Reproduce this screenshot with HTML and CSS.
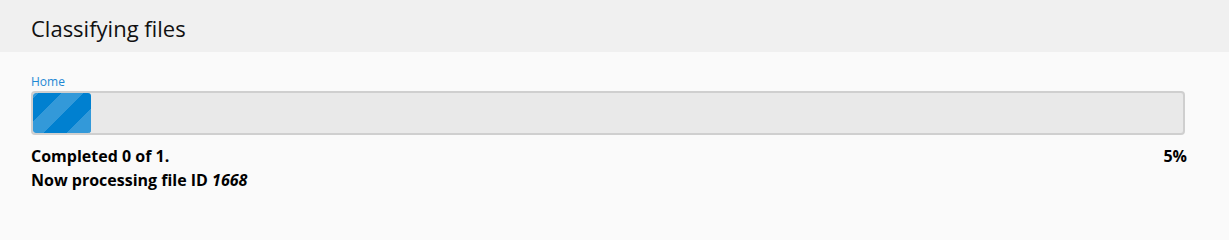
FILE: index.html
```html
<!DOCTYPE html>
<html>
<head>
<meta charset="utf-8">
<title>Classifying files</title>
<link rel="stylesheet" href="styles.css">
</head>
<body>
<header class="page-header">
  <h1 class="page-title">Classifying files</h1>
</header>
<main class="content">
  <nav class="breadcrumb"><a href="#">Home</a></nav>
  <div class="progress">
    <div class="progress-track">
      <div class="progress-bar" style="width: 5%"></div>
    </div>
    <div class="progress-info">
      <div class="progress-message">Completed 0 of 1.<br>Now processing file ID <em>1668</em></div>
      <div class="progress-percent">5%</div>
    </div>
  </div>
</main>
</body>
</html>
```
FILE: styles.css
```css
html, body {
  margin: 0;
  padding: 0;
}
body {
  background: #fafafa;
  font-family: "Open Sans", "Noto Sans", sans-serif;
  color: #000;
}
.page-header {
  background: #f0f0f0;
  height: 52px;
  padding: 0 31px;
  display: flex;
  align-items: center;
}
.page-title {
  margin: 0;
  padding-top: 3px;
  font-size: 22px;
  font-weight: 400;
  color: #111;
}
.content {
  padding: 21px 42px 0 31px;
}
.breadcrumb {
  font-size: 12px;
  line-height: 18px;
}
.breadcrumb a {
  color: #1e88d4;
  text-decoration: none;
}
.progress-track {
  height: 40px;
  border: 2px solid #cfcfcf;
  border-radius: 4px;
  background: #e9e9e9;
  width: 1150px;
  overflow: hidden;
}
.progress-bar {
  height: 100%;
  border-radius: 3px;
  background-color: #0080d0;
  background-image: linear-gradient(135deg,
    transparent 25%, rgba(255,255,255,0.2) 25%,
    rgba(255,255,255,0.2) 50%, transparent 50%,
    transparent 75%, rgba(255,255,255,0.2) 75%);
  background-size: 45px 45px;
  background-position: 6px 0;
}
.progress-info {
  display: flex;
  justify-content: space-between;
  font-weight: 700;
  font-size: 16px;
  line-height: 24px;
  padding-top: 9px;
  width: 1156px;
}
.progress-message em {
  font-style: italic;
}
```
